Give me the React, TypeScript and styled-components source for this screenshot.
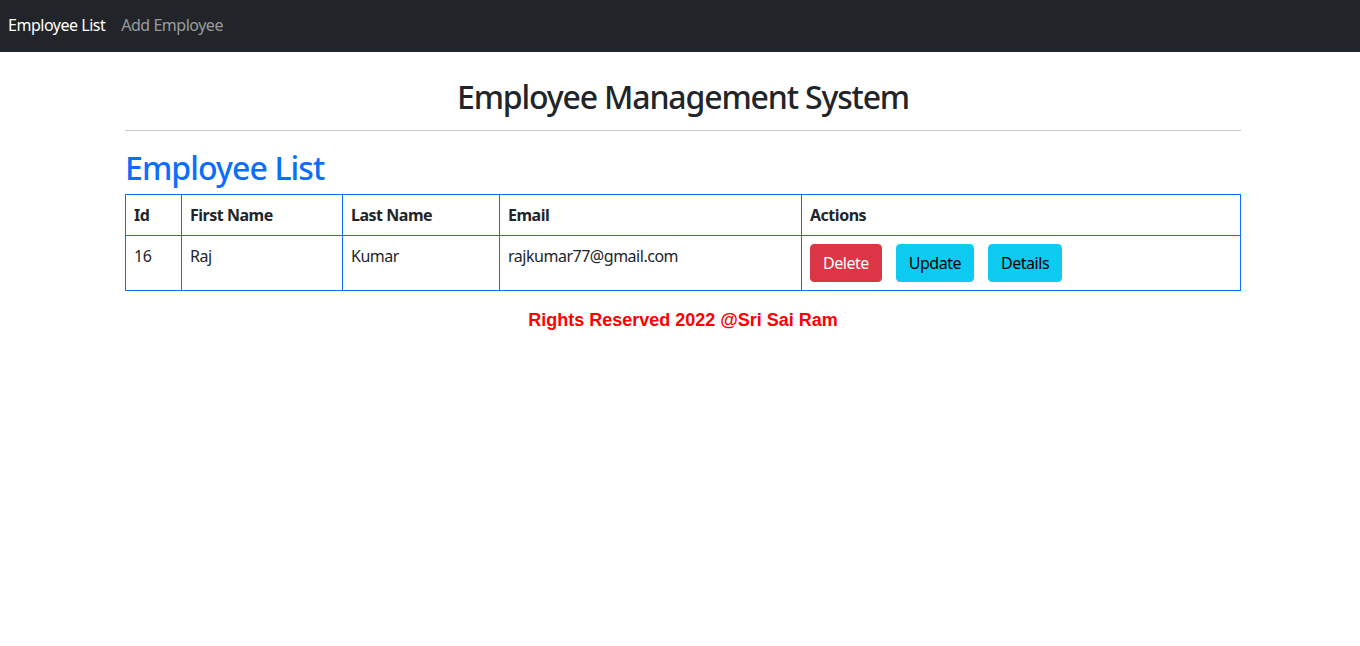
import React from "react";
import styled, { createGlobalStyle } from "styled-components";

const GlobalStyle = createGlobalStyle`
  * { box-sizing: border-box; }
  body {
    margin: 0;
    background: #fff;
    color: #212529;
    font-family: "Noto Sans", "Open Sans", sans-serif;
    font-size: 16px;
    line-height: 24px;
    letter-spacing: -0.03em;
  }
`;

const NavBar = styled.nav`
  height: 52px;
  background: #212529;
  display: flex;
  align-items: center;
  padding: 0 8px 3px;
  gap: 16px;
`;

const NavLink = styled.a<{ $active?: boolean }>`
  color: ${(p) => (p.$active ? "#fff" : "rgba(255,255,255,0.55)")};
  text-decoration: none;
  font-size: 16px;
  cursor: pointer;
`;

const Container = styled.main`
  width: 1116px;
  margin-left: 125px;
`;

const PageTitle = styled.h1`
  margin: 26px 0 14px;
  text-align: center;
  font-size: 32px;
  font-weight: 500;
  line-height: 38px;
  letter-spacing: -0.036em;
`;

const Divider = styled.hr`
  margin: 0;
  border: 0;
  border-top: 1px solid #cbcbcb;
`;

const SectionTitle = styled.h2`
  margin: 18px 0 7px;
  color: #0d6efd;
  font-size: 32px;
  font-weight: 500;
  line-height: 38px;
  letter-spacing: -0.028em;
`;

const Table = styled.table`
  width: 100%;
  border-collapse: collapse;
  table-layout: fixed;
`;

const Th = styled.th<{ $w?: number }>`
  width: ${(p) => (p.$w ? `${p.$w}px` : "auto")};
  border: 1px solid #0d6efd;
  padding: 8px;
  text-align: left;
  font-weight: 700;
`;

const Td = styled.td`
  border: 1px solid #0d6efd;
  padding: 8px;
  vertical-align: top;
  height: 55px;
`;

const Actions = styled.div`
  display: flex;
  gap: 14px;
`;

const Button = styled.button<{ $variant: "danger" | "info" }>`
  height: 38px;
  padding: 0 12px;
  border: 1px solid ${(p) => (p.$variant === "danger" ? "#dc3545" : "#0dcaf0")};
  border-radius: 4px;
  background: ${(p) => (p.$variant === "danger" ? "#dc3545" : "#0dcaf0")};
  color: ${(p) => (p.$variant === "danger" ? "#fff" : "#000")};
  font-family: inherit;
  font-size: 16px;
  line-height: 24px;
  letter-spacing: inherit;
  cursor: pointer;
`;

const Footer = styled.footer`
  margin-top: 18px;
  text-align: center;
  color: #ff0000;
  font-family: "Liberation Sans", Arial, sans-serif;
  font-weight: 700;
  font-size: 18px;
  line-height: 22px;
  letter-spacing: 0;
`;

export default function App() {
  return (
    <>
      <GlobalStyle />
      <NavBar>
        <NavLink $active>Employee List</NavLink>
        <NavLink>Add Employee</NavLink>
      </NavBar>
      <Container>
        <PageTitle>Employee Management System</PageTitle>
        <Divider />
        <SectionTitle>Employee List</SectionTitle>
        <Table>
          <thead>
            <tr>
              <Th $w={56}>Id</Th>
              <Th $w={161}>First Name</Th>
              <Th $w={157}>Last Name</Th>
              <Th $w={302}>Email</Th>
              <Th>Actions</Th>
            </tr>
          </thead>
          <tbody>
            <tr>
              <Td>16</Td>
              <Td>Raj</Td>
              <Td>Kumar</Td>
              <Td>rajkumar77@gmail.com</Td>
              <Td>
                <Actions>
                  <Button $variant="danger">Delete</Button>
                  <Button $variant="info">Update</Button>
                  <Button $variant="info">Details</Button>
                </Actions>
              </Td>
            </tr>
          </tbody>
        </Table>
        <Footer>Rights Reserved 2022 @Sri Sai Ram</Footer>
      </Container>
    </>
  );
}
